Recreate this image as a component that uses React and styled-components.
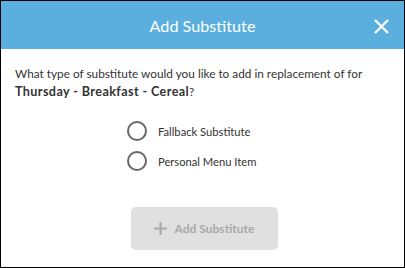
import React from 'react'
import styled, { createGlobalStyle } from 'styled-components'

const Global = createGlobalStyle`
  * { box-sizing: border-box; }
  html, body { margin: 0; padding: 0; background: #fff; }
  body { font-family: Lato, "Open Sans", sans-serif; }
`

const Dialog = styled.div`
  width: 405px;
  height: 268px;
  border: 1px solid #000;
  background: #fff;
  display: flex;
  flex-direction: column;
`

const Header = styled.div`
  height: 48px;
  background: #5aafdf;
  display: flex;
  align-items: center;
  justify-content: center;
  position: relative;
  color: #fff;
  font-size: 16.2px;
`

const Close = styled.button`
  position: absolute;
  right: 14px;
  top: 16px;
  width: 18px;
  height: 18px;
  padding: 0;
  border: 0;
  background: none;
  cursor: pointer;
  display: flex;
  align-items: center;
  justify-content: center;
`

const Body = styled.div`
  padding: 16px 14px 0;
  display: flex;
  flex-direction: column;
`

const Question = styled.p`
  margin: 0;
  font-size: 11.8px;
  line-height: 18px;
  color: #333;
  white-space: nowrap;
  b { font-weight: 700; font-size: 12.6px; letter-spacing: 0.4px; }
`

const Options = styled.div`
  margin-top: 20px;
  display: flex;
  flex-direction: column;
  gap: 10px;
  padding-left: 112px;
`

const Option = styled.label`
  display: flex;
  align-items: center;
  gap: 11px;
  font-size: 11.2px;
  color: #333;
  cursor: pointer;
`

const Radio = styled.span`
  width: 20px;
  height: 20px;
  border: 2px solid #666;
  border-radius: 50%;
`

const Footer = styled.div`
  margin-top: 36px;
  display: flex;
  justify-content: center;
  padding-left: 3px;
`

const AddButton = styled.button`
  width: 147px;
  height: 43px;
  border: 0;
  border-radius: 5px;
  background: #e0e0e0;
  color: #a8a8a8;
  font-family: Lato, sans-serif;
  font-size: 12px;
  font-weight: 700;
  display: flex;
  align-items: center;
  justify-content: center;
  gap: 8px;
  cursor: not-allowed;
`

const App = () => {
  return (
    <>
      <Global />
      <Dialog>
        <Header>
          Add Substitute
          <Close aria-label="close">
            <svg width="15" height="15" viewBox="0 0 15 15">
              <path d="M1 1 L14 14 M14 1 L1 14" stroke="#fff" strokeWidth="2.2" />
            </svg>
          </Close>
        </Header>
        <Body>
          <Question>
            What type of substitute would you like to add in replacement of for
            <br />
            <b>Thursday - Breakfast - Cereal</b>?
          </Question>
          <Options>
            <Option><Radio />Fallback Substitute</Option>
            <Option><Radio />Personal Menu Item</Option>
          </Options>
          <Footer>
            <AddButton disabled>
              <svg width="13" height="13" viewBox="0 0 13 13">
                <path d="M6.5 0 V13 M0 6.5 H13" stroke="#a8a8a8" strokeWidth="2" />
              </svg>
              Add Substitute
            </AddButton>
          </Footer>
        </Body>
      </Dialog>
    </>
  )
}

export default App
